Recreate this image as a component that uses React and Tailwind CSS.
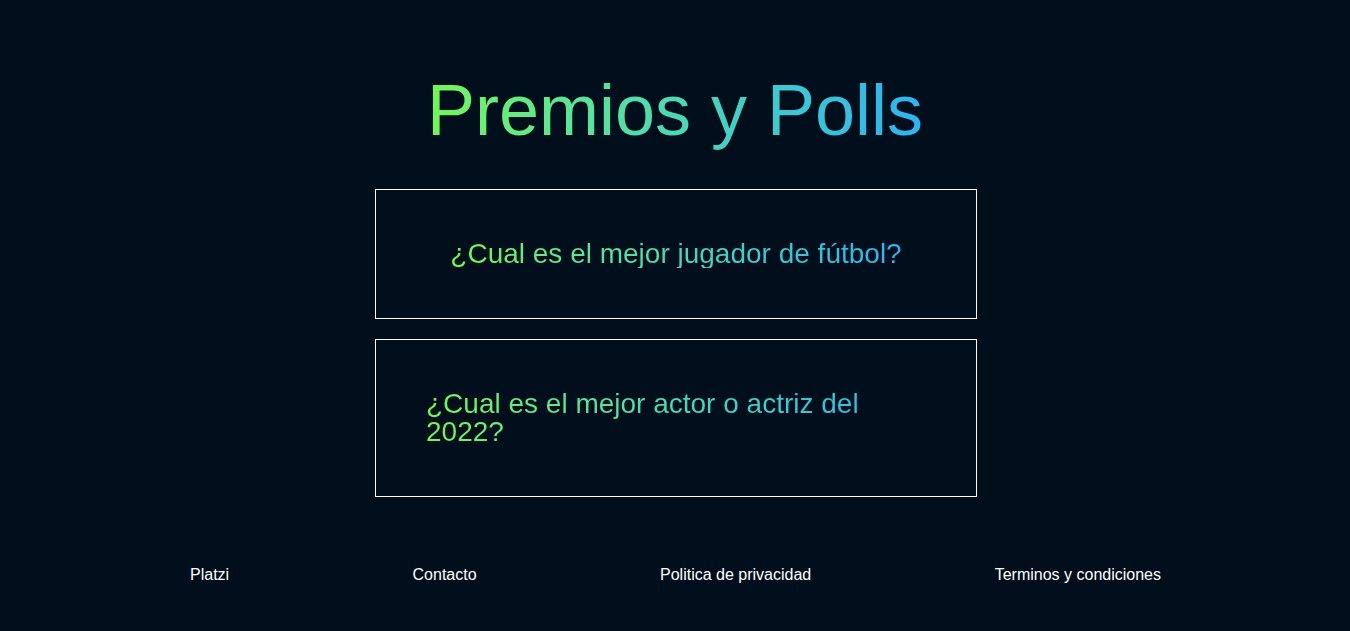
export default function App() {
  const grad = 'bg-gradient-to-r from-[#74f556] to-[#30b2f0] bg-clip-text text-transparent';
  const questions = ['¿Cual es el mejor jugador de fútbol?', '¿Cual es el mejor actor o actriz del 2022?'];

  return (
    <div className="min-h-screen bg-[#010f1c] font-['Liberation_Sans',Arial,sans-serif]">
      <header className="pt-[74px] text-center">
        <h1 className={`inline-block text-[72px] leading-none pb-3 ${grad}`}>Premios y Polls</h1>
      </header>

      <main className="flex flex-col items-center gap-5 mt-[31px] pl-[2px]">
        {questions.map((q) => (
          <div key={q} className="flex justify-center w-[602px] border border-white p-[50px]">
            <h2 className={`text-[28px] leading-[28px] ${grad}`}>{q}</h2>
          </div>
        ))}
      </main>

      <footer className="flex justify-between pl-[190px] pr-[189px] mt-[66px] text-white text-base">
        <a>Platzi</a>
        <a>Contacto</a>
        <a>Politica de privacidad</a>
        <a>Terminos y condiciones</a>
      </footer>
    </div>
  );
}
